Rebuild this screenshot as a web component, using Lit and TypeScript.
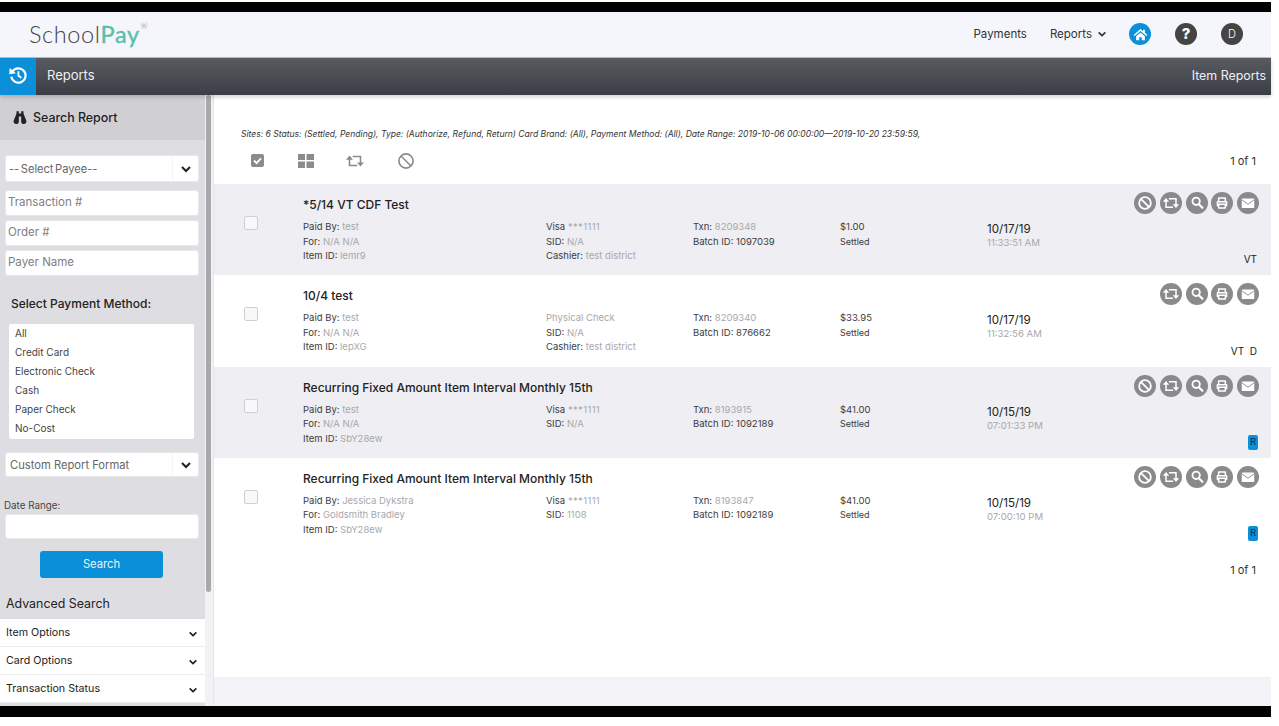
import { LitElement, html, css, svg } from "lit";
import { customElement } from "lit/decorators.js";

const chevron = svg`<path d="M2 4l4 4 4-4" fill="none" stroke="currentColor" stroke-width="2"/>`;
const ban = (c: string, w = 2) => svg`<circle cx="12" cy="12" r="7" fill="none" stroke="${c}" stroke-width="${w}"/><path d="M7 7l10 10" stroke="${c}" stroke-width="${w}"/>`;
const retweet = (c: string, w = 1.8) => svg`<path d="M6 9v8h8.500M18 15V7H9.500" fill="none" stroke="${c}" stroke-width="${w}"/><path d="M2.200 10.500L6 6l3.800 4.500zM14.200 13.500L18 18l3.800-4.500z" fill="${c}"/>`;
const search = svg`<circle cx="11" cy="10" r="4.400" fill="none" stroke="#fff" stroke-width="2.200"/><path d="M14.200 13.400l4.300 4.400" stroke="#fff" stroke-width="2.600" stroke-linecap="round"/>`;
const print = svg`<path d="M8 10V6h8v4M8 15H6.500V10.500h11V15H16M8 13.500h8V18H8z" fill="none" stroke="#fff" stroke-width="1.800" stroke-linejoin="round"/>`;
const mail = svg`<rect x="4.500" y="6.500" width="15" height="11.500" rx="1" fill="#fff"/><path d="M4.500 8l7.500 5.500L19.500 8" fill="none" stroke="#8a8a8c" stroke-width="1.100"/>`;

interface Row {
  title: string; lines: [string, string][]; pay: [string, string][]; txn: string; batch: string;
  amount: string; date: string; time: string; ban: boolean; tags: string; badge?: boolean;
}
const rows: Row[] = [
  { title: "*5/14 VT CDF Test", lines: [["Paid By:", "test"], ["For:", "N/A N/A"], ["Item ID:", "lemr9"]],
    pay: [["Visa", "***1111"], ["SID:", "N/A"], ["Cashier:", "test district"]], txn: "8209348", batch: "1097039",
    amount: "$1.00", date: "10/17/19", time: "11:33:51 AM", ban: true, tags: "VT" },
  { title: "10/4 test", lines: [["Paid By:", "test"], ["For:", "N/A N/A"], ["Item ID:", "lepXG"]],
    pay: [["", "Physical Check"], ["SID:", "N/A"], ["Cashier:", "test district"]], txn: "8209340", batch: "876662",
    amount: "$33.95", date: "10/17/19", time: "11:32:56 AM", ban: false, tags: "VT\u00a0 D" },
  { title: "Recurring Fixed Amount Item Interval Monthly 15th", lines: [["Paid By:", "test"], ["For:", "N/A N/A"], ["Item ID:", "SbY28ew"]],
    pay: [["Visa", "***1111"], ["SID:", "N/A"]], txn: "8193915", batch: "1092189",
    amount: "$41.00", date: "10/15/19", time: "07:01:33 PM", ban: true, tags: "", badge: true },
  { title: "Recurring Fixed Amount Item Interval Monthly 15th", lines: [["Paid By:", "Jessica Dykstra"], ["For:", "Goldsmith Bradley"], ["Item ID:", "SbY28ew"]],
    pay: [["Visa", "***1111"], ["SID:", "1108"]], txn: "8193847", batch: "1092189",
    amount: "$41.00", date: "10/15/19", time: "07:00:10 PM", ban: true, tags: "", badge: true },
];

@customElement("app-root")
export class AppRoot extends LitElement {
  static styles = css`
    :host { display: block; width: 1279px; height: 726px; background: #fff; overflow: hidden;
      font-family: Inter, "Liberation Sans", sans-serif; color: #333; }
    * { box-sizing: border-box; }
    .frame { width: 1271px; height: 715px; margin-top: 2px; display: flex; flex-direction: column; background: #fff; }
    .black { background: #000; flex: none; }
    .black.t { height: 10px; }
    .black.b { height: 11px; }
    header { height: 46px; flex: none; background: #f4f6fb; display: flex; align-items: center; padding: 0 28px 2px 29px; border-bottom: 1px solid #bcbdc2; }
    .logo { font-size: 23.5px; font-weight: 300; color: #444; letter-spacing: 0.6px; display: flex; align-items: flex-start; line-height: 28px; font-family: Lato, sans-serif; }
    .logo b { font-weight: 400; color: #5cbdaa; letter-spacing: 0.7px; -webkit-text-stroke: 0.4px #5cbdaa; }
    .logo sup { font-size: 8px; line-height: 12px; color: #666; margin-left: 1px; }
    .nav { margin-left: auto; display: flex; align-items: center; font-size: 11.5px; color: #333; }
    .nav .reports { margin-left: 23px; display: flex; align-items: center; gap: 5px; }
    .nav .reports svg { width: 10px; height: 10px; color: #333; }
    .circ { width: 22px; height: 22px; border-radius: 50%; display: flex; align-items: center; justify-content: center; background: #444; color: #fff; }
    .circ.home { background: #0b8fd9; margin-left: 22px; }
    .circ.q { margin-left: 24px; font-weight: 800; font-size: 15px; }
    .circ.d { margin-left: 24px; font-size: 11px; font-weight: 300; }
    .bar { height: 37px; flex: none; background: linear-gradient(#585b60, #3b3e44); display: flex; align-items: center; color: #f0f0f2; font-size: 13px; padding-right: 5px; box-shadow: 0 2px 4px rgba(0,0,0,.18); position: relative; }
    .bar .hist { width: 36px; height: 37px; background: #0b8fd9; display: flex; align-items: center; justify-content: center; padding-bottom: 3px; }
    .bar .t1 { margin-left: 11px; padding-bottom: 3px; }
    .bar .t2 { margin-left: auto; font-size: 12.4px; padding-bottom: 3px; }
    .body { flex: 1; min-height: 0; display: flex; overflow: hidden; }
    aside { width: 205px; flex: none; background: #dedee2; display: flex; flex-direction: column; overflow: hidden; }
    .sbar { width: 9px; flex: none; background: #f2f2f4; padding: 0 2px 0 1px; border-right: 1px solid #e6e6ea; }
    .thumb { height: 497px; background: #a9a9ad; border-radius: 3px; }
    .sh { height: 45px; flex: none; background: #d0d0d4; display: flex; align-items: center; padding-left: 13px; gap: 6px; font-size: 12.4px; font-weight: 500; color: #222; }
    .sh svg { width: 14px; height: 14px; margin-top: -2px; }
    .fld { margin-left: 5px; width: 194px; background: #fff; border: 1px solid #e9e9ec; border-radius: 3px; display: flex; align-items: center; color: #808084; font-size: 11.5px; padding: 0 0 2px 2px; height: 26px; flex: none; }
    .sel { padding: 0 0 0 4px; color: #666; font-size: 11.2px; position: relative; height: 27px; }
    .tight { padding-left: 3px; word-spacing: -1.500px; letter-spacing: -0.05px; }
    .sel .ar { margin-left: auto; width: 26px; height: 100%; border-left: 1px solid #f4f4f6; display: flex; align-items: center; justify-content: center; color: #222; }
    .sel .ar svg { width: 12px; height: 12px; }
    .label { font-size: 12px; font-weight: 500; color: #222; margin: 20px 0 12px 11px; line-height: 16px; }
    .list { margin-left: 9px; width: 185px; height: 115px; background: #fff; border-radius: 2px; padding-top: 0; flex: none; display: flex; flex-direction: column; }
    .list div { height: 19.1px; padding-left: 6px; font-size: 10px; line-height: 19px; color: #444; }
    .dr { font-size: 9.8px; margin: 22px 0 2px 4px; line-height: 13px; color: #444; }
    .btn { width: 123px; height: 27px; flex: none; margin: 12px 0 0 40px; background: #0b8fd9; color: #e8f4fb; font-size: 11.2px; border-radius: 3px; display: flex; align-items: center; justify-content: center; padding-bottom: 2px; }
    .adv { font-size: 12.4px; margin: 17px 0 0 6px; line-height: 17px; color: #222; flex: none; }
    .acc { margin-top: 7px; background: #fff; flex: none; }
    .acc div { height: 28px; display: flex; align-items: center; padding: 0 7px 1px 6px; font-size: 10.7px; color: #222; border-bottom: 1px solid #ececef; }
    .acc svg { width: 10px; height: 10px; margin-left: auto; margin-top: 3px; }
    main { flex: 1; min-width: 0; background: #fff; display: flex; flex-direction: column; }
    .filter { margin: 34px 0 0 27px; font-size: 8.56px; font-style: italic; color: #333; line-height: 10px; }
    .tools { height: 28px; display: flex; align-items: center; margin-top: 8px; padding: 0 15px 0 36px; flex: none; }
    .tools svg { flex: none; }
    .tools .pg { margin-left: auto; font-size: 11px; color: #333; }
    .row { height: 91.3px; flex: none; display: grid; grid-template-columns: 89px 243px 147px 147px 147px 120px 1fr; padding: 11px 14px 7px 0; font-size: 9.5px; line-height: 14.6px; color: #555; }
    .row:nth-child(odd) { background: #eeeef3; }
    .rows { margin-top: 9px; display: flex; flex-direction: column; }
    .cb { width: 14px; height: 14px; border: 1px solid #d0d0d4; background: #f8f8fa; border-radius: 2px; margin: 21px 0 0 30px; }
    .ttl { font-size: 12px; line-height: 18px; color: #222; margin: 1px 0 6px; white-space: nowrap; font-weight: 500; }
    .m { color: #a8a8ac; }
    .num { letter-spacing: .35px; }
    .c3 { padding-top: 25px; white-space: nowrap; }
    .dk { color: #3c3c3e; }
    .sm { font-size: 9px; }
    .dt { padding-top: 27px; font-size: 11.6px; color: #222; line-height: 14px; white-space: nowrap; }
    .dt .m { font-size: 9.6px; }
    .act { display: flex; flex-direction: column; align-items: flex-end; justify-content: space-between; }
    .ics { display: flex; gap: 0; margin-right: -4px; margin-top: -4px; }
    .ic { width: 25.7px; height: 24px; display: flex; align-items: center; justify-content: center; }
    .ic span { width: 22px; height: 22px; border-radius: 50%; background: #8a8a8c; display: flex; align-items: center; justify-content: center; }
    .ic svg { width: 20px; height: 20px; }
    .tag { color: #222; font-size: 10px; line-height: 12px; margin-bottom: 3px; }
    .badge { background: #0b8fd9; color: #0b2a55; font-size: 9.5px; width: 10px; height: 15px; border-radius: 2px; display: flex; align-items: center; justify-content: center; margin: 0 -1px 1px 0; }
    .pg2 { font-size: 11px; text-align: right; padding: 13px 15px 0 0; line-height: 16px; color: #333; }
    .foot { margin-top: auto; height: 29px; background: #f3f3f7; flex: none; }
  `;

  private rowT(r: Row) {
    return html`<div class="row">
      <div><div class="cb"></div></div>
      <div>
        <div class="ttl">${r.title}</div>
        ${r.lines.map(l => html`<div class="dk">${l[0]} <span class="m">${l[1]}</span></div>`)}
      </div>
      <div class="c3">
        ${r.pay.map(l => html`<div class="dk">${l[0]} <span class="m ${l[0] === "Visa" ? "num" : ""}">${l[1]}</span></div>`)}
      </div>
      <div class="c3">
        <div class="dk">Txn: <span class="m">${r.txn}</span></div>
        <div class="dk">Batch ID: ${r.batch}</div>
      </div>
      <div class="c3"><div class="dk">${r.amount}</div><div class="dk sm">Settled</div></div>
      <div class="dt"><div>${r.date}</div><div class="m">${r.time}</div></div>
      <div class="act">
        <div class="ics">
          ${r.ban ? html`<div class="ic"><span><svg viewBox="0 0 24 24">${ban("#fff", 2.2)}</svg></span></div>` : ""}
          <div class="ic"><span><svg viewBox="0 0 24 24">${retweet("#fff")}</svg></span></div>
          <div class="ic"><span><svg viewBox="0 0 24 24">${search}</svg></span></div>
          <div class="ic"><span><svg viewBox="0 0 24 24">${print}</svg></span></div>
          <div class="ic"><span><svg viewBox="0 0 24 24">${mail}</svg></span></div>
        </div>
        ${r.badge ? html`<div class="badge">R</div>` : html`<div class="tag">${r.tags}</div>`}
      </div>
    </div>`;
  }

  render() {
    return html`<div class="frame">
      <div class="black t"></div>
      <header>
        <div class="logo">School<b>Pay</b><sup>®</sup></div>
        <div class="nav">
          <span>Payments</span>
          <span class="reports">Reports <svg viewBox="0 0 12 12">${chevron}</svg></span>
          <span class="circ home"><svg width="15" height="14" viewBox="0 0 24 22"><path d="M12 3L1 12.500l1.500 1.600L12 6l9.500 8.100 1.500-1.600L19 9V4h-3v2.400z" fill="#fff"/><path d="M5 14.500L12 8.500l7 6V21h-5v-5h-4v5H5z" fill="#fff"/></svg></span>
          <span class="circ q">?</span>
          <span class="circ d">D</span>
        </div>
      </header>
      <div class="bar">
        <div class="hist"><svg width="20" height="20" viewBox="0 0 24 24"><path d="M5.200 8A8.600 8.600 0 1 1 4 14" fill="none" stroke="#fff" stroke-width="2.600"/><path d="M2 3.500l7.500 6.500-8 1z" fill="#fff"/><path d="M12.500 7.500V13l3.600 2.400" fill="none" stroke="#fff" stroke-width="2.200"/></svg></div>
        <span class="t1">Reports</span>
        <span class="t2">Item Reports</span>
      </div>
      <div class="body">
        <aside>
          <div class="sh"><svg viewBox="0 0 24 24"><path d="M6 2h4v4h4V2h4v4l5 13a4 4 0 0 1-9 1v-9h-4v9a4 4 0 0 1-9-1L6 6z" fill="#222"/></svg>Search Report</div>
          <div class="fld sel tight" style="margin-top:15px">-- Select Payee--<span class="ar"><svg viewBox="0 0 12 12">${chevron}</svg></span></div>
          <div class="fld" style="margin-top:8px">Transaction #</div>
          <div class="fld" style="margin-top:4px">Order #</div>
          <div class="fld" style="margin-top:4px">Payer Name</div>
          <div class="label">Select Payment Method:</div>
          <div class="list">
            <div>All</div><div>Credit Card</div><div>Electronic Check</div><div>Cash</div><div>Paper Check</div><div>No-Cost</div>
          </div>
          <div class="fld sel" style="margin-top:13px;height:25px">Custom Report Format<span class="ar"><svg viewBox="0 0 12 12">${chevron}</svg></span></div>
          <div class="dr">Date Range:</div>
          <div class="fld" style="height:25px"></div>
          <div class="btn">Search</div>
          <div class="adv">Advanced Search</div>
          <div class="acc">
            <div>Item Options<svg viewBox="0 0 12 12">${chevron}</svg></div>
            <div>Card Options<svg viewBox="0 0 12 12">${chevron}</svg></div>
            <div>Transaction Status<svg viewBox="0 0 12 12">${chevron}</svg></div>
          </div>
        </aside>
        <div class="sbar"><div class="thumb"></div></div>
        <main>
          <div class="filter">Sites: 6 Status: (Settled, Pending), Type: (Authorize, Refund, Return) Card Brand: (All), Payment Method: (All), Date Range: 2019-10-06 00:00:00—2019-10-20 23:59:59,</div>
          <div class="tools">
            <svg width="16" height="16" viewBox="0 0 16 16" style="margin-right:32px"><rect x="1" y="1" width="13" height="13" rx="2" fill="#8b8b8e"/><path d="M4 7.500l2.600 2.600L11 5.400" fill="none" stroke="#fff" stroke-width="1.800"/></svg>
            <svg width="16" height="14" viewBox="0 0 16 14" style="margin-right:30px"><path d="M0 0h7v6H0zM8.500 0H16v6H8.500zM0 7.500h7V14H0zM8.500 7.500H16V14H8.500z" fill="#8b8b8e"/></svg>
            <svg width="22" height="22" viewBox="0 0 24 24" style="margin-right:30px">${retweet("#8b8b8e", 1.700)}</svg>
            <svg width="20" height="20" viewBox="0 0 24 24"><circle cx="12" cy="12" r="8.500" fill="none" stroke="#8b8b8e" stroke-width="2"/><path d="M6 6l12 12" stroke="#8b8b8e" stroke-width="2"/></svg>
            <span class="pg">1 of 1</span>
          </div>
          <div class="rows">${rows.map(r => this.rowT(r))}</div>
          <div class="pg2">1 of 1</div>
          <div class="foot"></div>
        </main>
      </div>
      <div class="black b"></div>
    </div>`;
  }
}
